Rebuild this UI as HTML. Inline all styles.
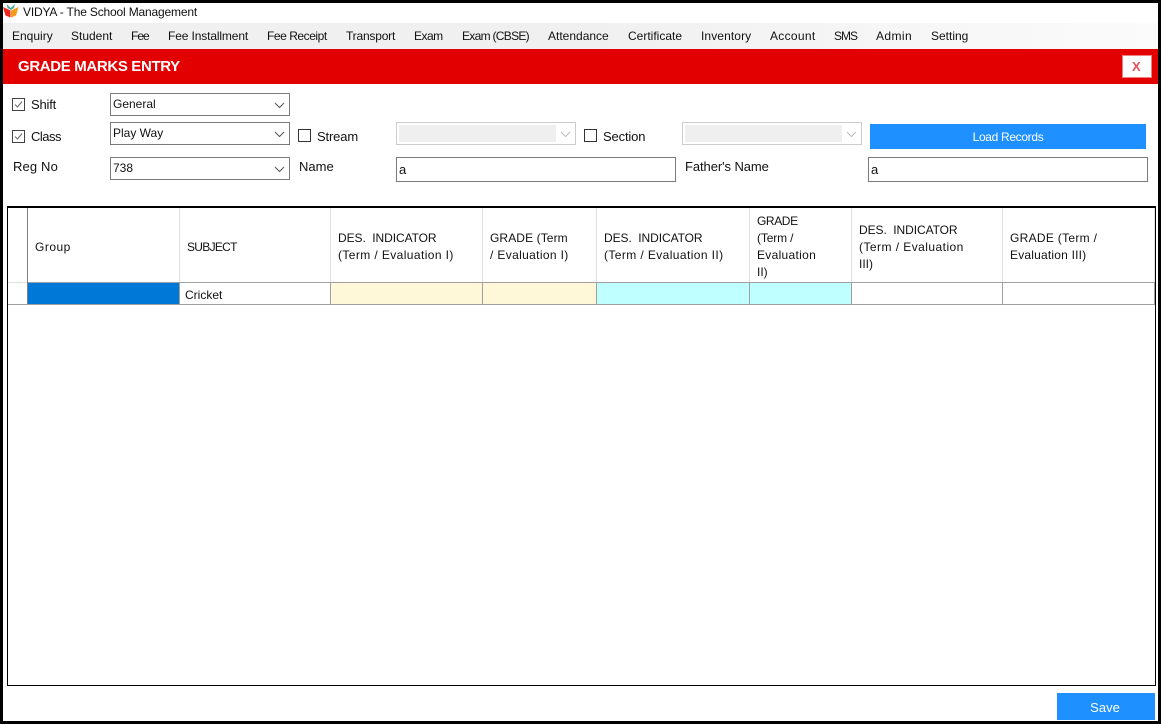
<!DOCTYPE html>
<html><head><meta charset="utf-8"><style>
html,body{margin:0;padding:0}
body{width:1161px;height:724px;position:relative;overflow:hidden;background:#fff;font-family:"Liberation Sans",sans-serif;font-size:12px;color:#111}
.b{position:absolute;box-sizing:border-box}
.t{position:absolute;white-space:pre;line-height:17px;height:17px}
.m{top:28px}
.h{position:absolute;top:208px;width:1px;height:74px;background:#e0e0e0}
.c{position:absolute;top:283px;width:1px;height:21px;background:#a0a0a0}
.combo{position:absolute;box-sizing:border-box;border:1px solid #7a7a7a;background:#fff;width:180px;height:23px}
.combo.d{border:1px solid #ccc}
.combo .fill{position:absolute;left:2px;top:2px;width:157px;height:17px;background:#efefef}
.combo svg{position:absolute;right:4px;top:8px}
.chk{position:absolute;box-sizing:border-box;width:13px;height:13px;border:1px solid #333;background:#fff}
.inp{position:absolute;box-sizing:border-box;border:1px solid #7a7a7a;width:280px;height:25px;background:#fff}
</style></head><body>
<div class="b" style="left:0;top:0;width:1161px;height:3px;background:#000"></div>
<div class="b" style="left:0;top:721px;width:1161px;height:3px;background:#000"></div>
<div class="b" style="left:0;top:0;width:3px;height:724px;background:#000"></div>
<div class="b" style="left:1158px;top:0;width:3px;height:724px;background:#000"></div>

<svg class="b" style="left:3px;top:3px" width="16" height="15" viewBox="0 0 16 15"><path d="M0 4 L7.500 7.500 L7.500 14.500 L2.500 12.500 Z" fill="#e8261c"/><path d="M8 7.500 L15.500 4 L13 12.500 L8 14.500 Z" fill="#f59a1b"/><path d="M3.500 1 L7.800 5 L12 1 L11 5 L7.800 7 L4.500 5 Z" fill="#4fa6a0"/></svg>
<span class="t" style="left:23px;top:4px;letter-spacing:-.17px">VIDYA - The School Management</span>

<div class="b" style="left:3px;top:23px;width:1155px;height:26px;background:linear-gradient(90deg,#f0f0f0,#f0f0f0 50%,#fbfbfb)"></div>
<span class="t m" style="left:12px">Enquiry</span>
<span class="t m" style="left:71px">Student</span>
<span class="t m" style="left:131px;letter-spacing:-1px">Fee</span>
<span class="t m" style="left:168px;letter-spacing:-.13px">Fee Installment</span>
<span class="t m" style="left:267px;letter-spacing:-.45px">Fee Receipt</span>
<span class="t m" style="left:346px;letter-spacing:-.2px">Transport</span>
<span class="t m" style="left:414px;letter-spacing:-.5px">Exam</span>
<span class="t m" style="left:462px;letter-spacing:-.7px">Exam (CBSE)</span>
<span class="t m" style="left:548px">Attendance</span>
<span class="t m" style="left:628px">Certificate</span>
<span class="t m" style="left:701px;letter-spacing:.1px">Inventory</span>
<span class="t m" style="left:770px;letter-spacing:.3px">Account</span>
<span class="t m" style="left:834px;letter-spacing:-1px">SMS</span>
<span class="t m" style="left:876px;letter-spacing:.4px">Admin</span>
<span class="t m" style="left:931px">Setting</span>

<div class="b" style="left:3px;top:49px;width:1155px;height:35px;background:#e30000"></div>
<span class="t" style="left:18px;top:58px;font-size:15px;font-weight:bold;color:#fff;letter-spacing:-.35px">GRADE MARKS ENTRY</span>
<div class="b" style="left:1122px;top:55px;width:30px;height:23px;background:#fff;border:1px solid #f08080"></div>
<span class="t" style="left:1132px;top:58px;font-size:13px;font-weight:bold;color:#e8505b">X</span>

<div class="chk" style="left:12px;top:98px;border-color:#444"><svg width="11" height="11" style="position:absolute;left:0;top:0"><path d="M2 5.500 L4.500 8 L9 2.500" fill="none" stroke="#666" stroke-width="1"/></svg></div>
<span class="t" style="left:31px;top:96px;font-size:13px;letter-spacing:-.2px">Shift</span>
<div class="combo" style="left:110px;top:93px"><span class="t" style="left:2px;top:2px">General</span><svg width="11" height="7"><path d="M1 1 L5.500 5.500 L10 1" fill="none" stroke="#555"/></svg></div>

<div class="chk" style="left:12px;top:130px;border-color:#444"><svg width="11" height="11" style="position:absolute;left:0;top:0"><path d="M2 5.500 L4.500 8 L9 2.500" fill="none" stroke="#666" stroke-width="1"/></svg></div>
<span class="t" style="left:31px;top:128px;font-size:13px;letter-spacing:-.5px">Class</span>
<div class="combo" style="left:110px;top:122px"><span class="t" style="left:2px;top:2px">Play Way</span><svg width="11" height="7"><path d="M1 1 L5.500 5.500 L10 1" fill="none" stroke="#555"/></svg></div>

<div class="chk" style="left:298px;top:129px"></div>
<span class="t" style="left:317px;top:128px;font-size:13px;letter-spacing:-.15px">Stream</span>
<div class="combo d" style="left:396px;top:122px"><div class="fill"></div><svg width="11" height="7"><path d="M1 1 L5.500 5.500 L10 1" fill="none" stroke="#bbb"/></svg></div>
<div class="chk" style="left:584px;top:129px"></div>
<span class="t" style="left:603px;top:128px;font-size:13px;letter-spacing:-.15px">Section</span>
<div class="combo d" style="left:682px;top:122px"><div class="fill"></div><svg width="11" height="7"><path d="M1 1 L5.500 5.500 L10 1" fill="none" stroke="#bbb"/></svg></div>
<div class="b" style="left:870px;top:124px;width:276px;height:25px;background:#1e90ff"></div>
<span class="t" style="left:870px;top:129px;width:276px;text-align:center;color:#fff;letter-spacing:-.33px">Load Records</span>

<span class="t" style="left:13px;top:158px;font-size:13px;letter-spacing:.15px">Reg No</span>
<div class="combo" style="left:110px;top:157px"><span class="t" style="left:2px;top:2px">738</span><svg width="11" height="7"><path d="M1 1 L5.500 5.500 L10 1" fill="none" stroke="#555"/></svg></div>
<span class="t" style="left:299px;top:158px;font-size:13px">Name</span>
<div class="inp" style="left:396px;top:157px"><span class="t" style="left:2px;top:3px;font-size:13px">a</span></div>
<span class="t" style="left:685px;top:158px;font-size:13px;letter-spacing:-.08px">Father's Name</span>
<div class="inp" style="left:868px;top:157px"><span class="t" style="left:2px;top:3px;font-size:13px">a</span></div>

<div class="b" style="left:7px;top:206px;width:1149px;height:480px;border:1px solid #000;border-top-width:2px;background:#fff"></div>

<div class="b" style="left:331px;top:283px;width:151px;height:21px;background:#fff8d8"></div>
<div class="b" style="left:483px;top:283px;width:113px;height:21px;background:#fff8d8"></div>
<div class="b" style="left:597px;top:283px;width:152px;height:21px;background:#bfffff"></div>
<div class="b" style="left:750px;top:283px;width:101px;height:21px;background:#bfffff"></div>
<div class="b" style="left:28px;top:283px;width:151px;height:21px;background:#0078d7"></div>

<div class="b" style="left:27px;top:282px;width:1128px;height:1px;background:#a0a0a0"></div>
<div class="b" style="left:8px;top:304px;width:1147px;height:1px;background:#a0a0a0"></div>
<div class="b" style="left:8px;top:282px;width:19px;height:1px;background:#e0e0e0"></div>
<div class="b" style="left:27px;top:208px;width:1px;height:96px;background:#808080"></div>

<div class="h" style="left:179px"></div><div class="h" style="left:330px"></div><div class="h" style="left:482px"></div><div class="h" style="left:596px"></div><div class="h" style="left:749px"></div><div class="h" style="left:851px"></div><div class="h" style="left:1002px"></div><div class="h" style="left:1154px"></div>
<div class="c" style="left:179px"></div><div class="c" style="left:330px"></div><div class="c" style="left:482px"></div><div class="c" style="left:596px"></div><div class="c" style="left:749px"></div><div class="c" style="left:851px"></div><div class="c" style="left:1002px"></div><div class="c" style="left:1154px"></div>

<span class="t" style="left:35px;top:239px;letter-spacing:.5px">Group</span>
<span class="t" style="left:187px;top:239px;letter-spacing:-.7px">SUBJECT</span>
<span class="t" style="left:338px;top:230px;letter-spacing:-.07px">DES.  INDICATOR</span>
<span class="t" style="left:338px;top:247px;letter-spacing:.4px">(Term / Evaluation I)</span>
<span class="t" style="left:490px;top:230px;letter-spacing:.1px">GRADE (Term</span>
<span class="t" style="left:490px;top:247px;letter-spacing:.35px">/ Evaluation I)</span>
<span class="t" style="left:604px;top:230px;letter-spacing:-.07px">DES.  INDICATOR</span>
<span class="t" style="left:604px;top:247px;letter-spacing:.4px">(Term / Evaluation II)</span>
<span class="t" style="left:757px;top:213px;letter-spacing:-.4px">GRADE</span>
<span class="t" style="left:757px;top:230px;letter-spacing:-.15px">(Term /</span>
<span class="t" style="left:757px;top:247px;letter-spacing:.3px">Evaluation</span>
<span class="t" style="left:757px;top:264px">II)</span>
<span class="t" style="left:859px;top:222px;letter-spacing:-.07px">DES.  INDICATOR</span>
<span class="t" style="left:859px;top:239px;letter-spacing:.45px">(Term / Evaluation</span>
<span class="t" style="left:859px;top:256px">III)</span>
<span class="t" style="left:1010px;top:230px;letter-spacing:.3px">GRADE (Term /</span>
<span class="t" style="left:1010px;top:247px;letter-spacing:.2px">Evaluation III)</span>
<span class="t" style="left:185px;top:287px">Cricket</span>

<div class="b" style="left:1057px;top:693px;width:98px;height:27px;background:#1e90ff"></div>
<span class="t" style="left:1056px;top:699px;width:98px;text-align:center;color:#fff;font-size:13px">Save</span>
</body></html>
